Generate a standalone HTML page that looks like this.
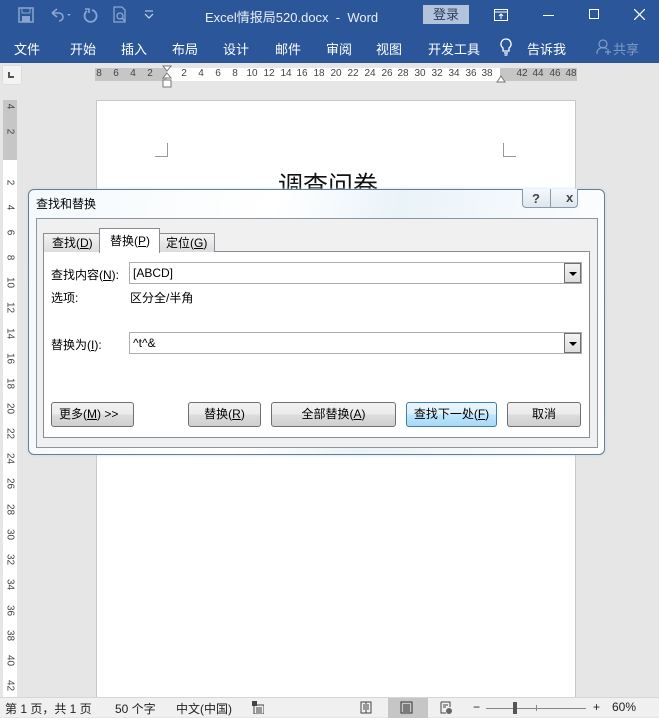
<!DOCTYPE html>
<html><head><meta charset="utf-8"><style>
*{margin:0;padding:0;box-sizing:border-box}
body{width:659px;height:717px;overflow:hidden;position:relative;background:#e6e6e6;font-family:"Liberation Sans","Noto Sans CJK SC",sans-serif;font-size:12px;color:#000}
.abs{position:absolute}
#title{left:0;top:0;width:659px;height:31px;background:#2b579a;color:#fff}
#ribbon{left:0;top:31px;width:659px;height:32px;background:#2b579a;color:#fff;font-size:13px}
#ribbon span{position:absolute;top:8px}
.rn{position:absolute;top:68px;font-size:10px;color:#444;transform:translateX(-50%)}
.vn{position:absolute;left:4px;font-size:10px;color:#444;transform:rotate(90deg);width:12px;text-align:center}
.btn{position:absolute;top:402px;height:25px;border:1px solid #707070;border-radius:3px;background:linear-gradient(#f2f2f2,#ebebeb 50%,#dddddd 51%,#cfcfcf);text-align:center;line-height:23px;font-size:12px}
.field{position:absolute;left:129px;width:453px;height:22px;border:1px solid #abadb3;background:#fff;padding-left:3px;line-height:20px}
.dd{position:absolute;right:0;top:0;width:17px;height:20px;border-left:1px solid #abadb3;background:linear-gradient(#f3f3f3,#dcdcdc);border:1px solid #707070}
.dd:after{content:"";position:absolute;left:4px;top:8px;border:4px solid transparent;border-top:4px solid #000;border-bottom:0}
u{text-decoration:underline}
#status{left:0;top:697px;width:659px;height:20px;background:#f0f0f0;border-top:1px solid #d6d6d6;font-size:12px;color:#222}
#status span{position:absolute;top:2px}
</style></head><body>
<div id="title" class="abs">
 <svg class="abs" style="left:18px;top:7px" width="16" height="16"><rect x="1" y="1" width="14" height="14" fill="none" stroke="#8aa6cf" stroke-width="1.5"/><rect x="4" y="1" width="8" height="5" fill="none" stroke="#8aa6cf"/><rect x="4" y="9" width="8" height="6" fill="#8aa6cf"/></svg>
 <svg class="abs" style="left:48px;top:7px" width="24" height="16"><path d="M4 6 L9 2 M4 6 L9 10 M4 6 H11 A4 4 0 0 1 11 14" fill="none" stroke="#8aa6cf" stroke-width="1.6"/><path d="M19 7 l2 2 l2 -2z" fill="#8aa6cf"/></svg>
 <svg class="abs" style="left:82px;top:7px" width="16" height="16"><path d="M10 3 A6 6 0 1 1 5 4" fill="none" stroke="#8aa6cf" stroke-width="1.8"/><path d="M3 2 L7 2 L7 6" fill="none" stroke="#8aa6cf" stroke-width="1.6"/></svg>
 <svg class="abs" style="left:112px;top:6px" width="16" height="18"><path d="M2 1 H10 L13 4 V16 H2Z" fill="none" stroke="#8aa6cf" stroke-width="1.3"/><circle cx="8" cy="10" r="3" fill="none" stroke="#8aa6cf" stroke-width="1.3"/><path d="M10 12 L13 15" stroke="#8aa6cf" stroke-width="1.5"/></svg>
 <svg class="abs" style="left:144px;top:10px" width="10" height="10"><path d="M1 1 H9" stroke="#cbd6e8"/><path d="M1 4 L5 8 L9 4" fill="none" stroke="#cbd6e8" stroke-width="1.2"/></svg>
 <span class="abs" style="left:205px;top:7px;font-size:13px;color:#e8eef7">Excel情报局520.docx&nbsp; -&nbsp; Word</span>
 <div class="abs" style="left:423px;top:5px;width:46px;height:19px;background:#b3c3dc;color:#2b3f60;text-align:center;line-height:19px;font-size:13px">登录</div>
 <svg class="abs" style="left:494px;top:9px" width="14" height="12"><rect x="0.5" y="0.5" width="13" height="11" fill="none" stroke="#fff"/><path d="M0.5 3 H13.5 M7 10 V5 M5 7 L7 5 L9 7" fill="none" stroke="#fff"/></svg>
 <div class="abs" style="left:543px;top:15px;width:11px;height:1px;background:#fff"></div>
 <div class="abs" style="left:589px;top:9px;width:10px;height:10px;border:1px solid #fff"></div>
 <svg class="abs" style="left:634px;top:9px" width="11" height="11"><path d="M0 0 L11 11 M11 0 L0 11" stroke="#fff" stroke-width="1.2"/></svg>
</div>
<div id="ribbon" class="abs">
 <span style="left:14px">文件</span><span style="left:70px">开始</span><span style="left:121px">插入</span><span style="left:172px">布局</span><span style="left:223px">设计</span><span style="left:275px">邮件</span><span style="left:326px">审阅</span><span style="left:376px">视图</span><span style="left:428px">开发工具</span>
 <svg class="abs" style="left:500px;top:7px" width="12" height="18"><path d="M6 1 A5 5 0 0 0 3 10 V13 H9 V10 A5 5 0 0 0 6 1Z M4 15 H8 M4.5 17 H7.5" fill="none" stroke="#fff" stroke-width="1.3"/></svg>
 <span style="left:527px">告诉我</span>
 <svg class="abs" style="left:596px;top:8px" width="16" height="16"><circle cx="7" cy="5" r="4" fill="none" stroke="#7f9bc8" stroke-width="1.2"/><path d="M1 15 A6 6 0 0 1 11 10 M12 10 V16 M9 13 H15" fill="none" stroke="#7f9bc8" stroke-width="1.2"/></svg>
 <span style="left:613px;color:#7f9bc8">共享</span>
</div>
<!-- corner button -->
<div class="abs" style="left:2px;top:65px;width:20px;height:20px;background:#f3f3f3;border:1px solid #ddd"></div>
<div class="abs" style="left:8px;top:72px;width:6px;height:6px;border-left:2px solid #555;border-bottom:2px solid #555"></div>
<!-- horizontal ruler -->
<div class="abs" style="left:95px;top:68px;width:72px;height:13px;background:#c6c6c6"></div>
<div class="abs" style="left:167px;top:68px;width:333px;height:13px;background:#fff"></div>
<div class="abs" style="left:500px;top:68px;width:77px;height:13px;background:#c6c6c6"></div>
<span class="rn" style="left:99px">8</span><span class="rn" style="left:116px">6</span><span class="rn" style="left:133px">4</span><span class="rn" style="left:150px">2</span>
<span class="rn" style="left:184px">2</span><span class="rn" style="left:201px">4</span><span class="rn" style="left:218px">6</span><span class="rn" style="left:235px">8</span><span class="rn" style="left:252px">10</span><span class="rn" style="left:269px">12</span><span class="rn" style="left:286px">14</span><span class="rn" style="left:302px">16</span><span class="rn" style="left:319px">18</span><span class="rn" style="left:336px">20</span><span class="rn" style="left:353px">22</span><span class="rn" style="left:370px">24</span><span class="rn" style="left:387px">26</span><span class="rn" style="left:403px">28</span><span class="rn" style="left:420px">30</span><span class="rn" style="left:437px">32</span><span class="rn" style="left:454px">34</span><span class="rn" style="left:471px">36</span><span class="rn" style="left:487px">38</span>
<span class="rn" style="left:522px">42</span><span class="rn" style="left:538px">44</span><span class="rn" style="left:555px">46</span><span class="rn" style="left:571px">48</span>
<svg class="abs" style="left:162px;top:65px" width="11" height="24"><path d="M1 1 H9 L5 6Z M5 8 L1 13 H9Z" fill="#fff" stroke="#777"/><rect x="1" y="15" width="8" height="7" fill="#fff" stroke="#777"/></svg>
<svg class="abs" style="left:496px;top:73px" width="10" height="10"><path d="M1 9 L5 3 L9 9Z" fill="#fff" stroke="#777"/></svg>
<!-- vertical ruler -->
<div class="abs" style="left:3px;top:100px;width:14px;height:60px;background:#c6c6c6"></div>
<div class="abs" style="left:3px;top:160px;width:14px;height:537px;background:#fff"></div>
<span class="vn" style="top:101px">4</span><span class="vn" style="top:126px">2</span>
<span class="vn" style="top:177px">2</span><span class="vn" style="top:202px">4</span><span class="vn" style="top:227px">6</span><span class="vn" style="top:252px">8</span><span class="vn" style="top:277px">10</span><span class="vn" style="top:302px">12</span><span class="vn" style="top:328px">14</span><span class="vn" style="top:353px">16</span><span class="vn" style="top:378px">18</span><span class="vn" style="top:403px">20</span><span class="vn" style="top:428px">22</span><span class="vn" style="top:453px">24</span><span class="vn" style="top:478px">26</span><span class="vn" style="top:504px">28</span><span class="vn" style="top:529px">30</span><span class="vn" style="top:554px">32</span><span class="vn" style="top:579px">34</span><span class="vn" style="top:605px">36</span><span class="vn" style="top:630px">38</span><span class="vn" style="top:655px">40</span><span class="vn" style="top:680px">42</span>
<!-- page -->
<div class="abs" style="left:96px;top:100px;width:480px;height:597px;background:#fff;border:1px solid #c8c8c8;border-bottom:none"></div>
<div class="abs" style="left:155px;top:143px;width:13px;height:14px;border-right:1px solid #999;border-bottom:1px solid #999"></div>
<div class="abs" style="left:503px;top:143px;width:13px;height:14px;border-left:1px solid #999;border-bottom:1px solid #999"></div>
<div class="abs" style="left:278px;top:166px;font-size:25px;color:#111">调查问卷</div>
<!-- dialog -->
<div class="abs" style="left:28px;top:189px;width:577px;height:266px;border:1px solid #6f7b88;border-radius:6px;background:linear-gradient(100deg,#f4f9fc 0%,#ffffff 40%,#eaf3f8 60%,#ffffff 100%);box-shadow:0 0 3px #b8dff0"></div>
<span class="abs" style="left:36px;top:195px;font-size:12px">查找和替换</span>
<div class="abs" style="left:522px;top:189px;width:56px;height:19px;border:1px solid #8a9aab;border-top:none;border-radius:0 0 4px 4px;background:linear-gradient(#f6f9fc,#dde6ee)"></div>
<div class="abs" style="left:550px;top:189px;width:1px;height:19px;background:#8a9aab"></div>
<span class="abs" style="left:532px;top:191px;font-size:13px;color:#444;font-weight:bold">?</span>
<span class="abs" style="left:566px;top:190px;font-size:13px;color:#444;font-weight:bold">x</span>
<div class="abs" style="left:36px;top:218px;width:562px;height:230px;background:#f0f0f0;border:1px solid #8b96a1"></div>
<div class="abs" style="left:43px;top:251px;width:547px;height:187px;background:#fff;border:1px solid #898c95"></div>
<div class="abs" style="left:43px;top:233px;width:57px;height:19px;border:1px solid #898c95;border-bottom:none;background:linear-gradient(#f4f4f4,#dcdcdc)"></div>
<span class="abs" style="left:52px;top:234px">查找(<u>D</u>)</span>
<div class="abs" style="left:159px;top:233px;width:56px;height:19px;border:1px solid #898c95;border-bottom:none;background:linear-gradient(#f4f4f4,#dcdcdc)"></div>
<span class="abs" style="left:166px;top:234px">定位(<u>G</u>)</span>
<div class="abs" style="left:99px;top:228px;width:61px;height:25px;border:1px solid #898c95;border-bottom:none;background:#fff"></div>
<span class="abs" style="left:110px;top:232px">替换(<u>P</u>)</span>
<span class="abs" style="left:51px;top:266px">查找内容(<u>N</u>):</span>
<div class="field" style="top:262px">[ABCD]<div class="dd"></div></div>
<span class="abs" style="left:51px;top:289px">选项:</span>
<span class="abs" style="left:130px;top:289px">区分全/半角</span>
<span class="abs" style="left:51px;top:336px">替换为(<u>I</u>):</span>
<div class="field" style="top:332px">^t^&amp;<div class="dd"></div></div>
<div class="btn" style="left:51px;width:83px;text-align:left;padding-left:7px">更多(<u>M</u>) &gt;&gt;</div>
<div class="btn" style="left:188px;width:73px">替换(<u>R</u>)</div>
<div class="btn" style="left:271px;width:125px">全部替换(<u>A</u>)</div>
<div class="btn" style="left:406px;width:91px;border-color:#3c7fb1;background:linear-gradient(#eaf6fd,#d9f0fc 50%,#bee6fd 51%,#a7d9f5)">查找下一处(<u>F</u>)</div>
<div class="btn" style="left:507px;width:74px">取消</div>
<!-- status bar -->
<div id="status" class="abs">
 <span style="left:5px">第 1 页，共 1 页</span>
 <span style="left:115px">50 个字</span>
 <span style="left:176px">中文(中国)</span>
 <svg class="abs" style="left:252px;top:3px" width="12" height="13"><rect x="0" y="0" width="5" height="5" fill="#444"/><rect x="2" y="4" width="10" height="9" fill="none" stroke="#444"/><path d="M4 7h6M4 9h6M4 11h6" stroke="#444"/></svg>
 <svg class="abs" style="left:360px;top:3px" width="12" height="13"><path d="M1 1 H11 V12 H1Z M6 1 V12 M3 4h2M3 6h2M3 8h2M7 4h2M7 6h2M7 8h2" fill="none" stroke="#444"/></svg>
 <div class="abs" style="left:388px;top:0;width:40px;height:20px;background:#c6c6c6"></div>
 <svg class="abs" style="left:400px;top:3px" width="13" height="13"><path d="M1 1 H12 V12 H1Z M3 4h7M3 6h7M3 8h7M3 10h7" fill="none" stroke="#333"/></svg>
 <svg class="abs" style="left:440px;top:3px" width="13" height="13"><path d="M1 1 H10 V6 M1 1 V12 H6 M3 4h5M3 6h3" fill="none" stroke="#444"/><circle cx="9" cy="10" r="3" fill="#666"/></svg>
 <span style="left:473px">−</span>
 <div class="abs" style="left:486px;top:10px;width:100px;height:1px;background:#888"></div>
 <div class="abs" style="left:536px;top:7px;width:1px;height:6px;background:#888"></div>
 <div class="abs" style="left:513px;top:4px;width:4px;height:12px;background:#555"></div>
 <span style="left:593px">+</span>
 <span style="left:612px">60%</span>
</div>
</body></html>
